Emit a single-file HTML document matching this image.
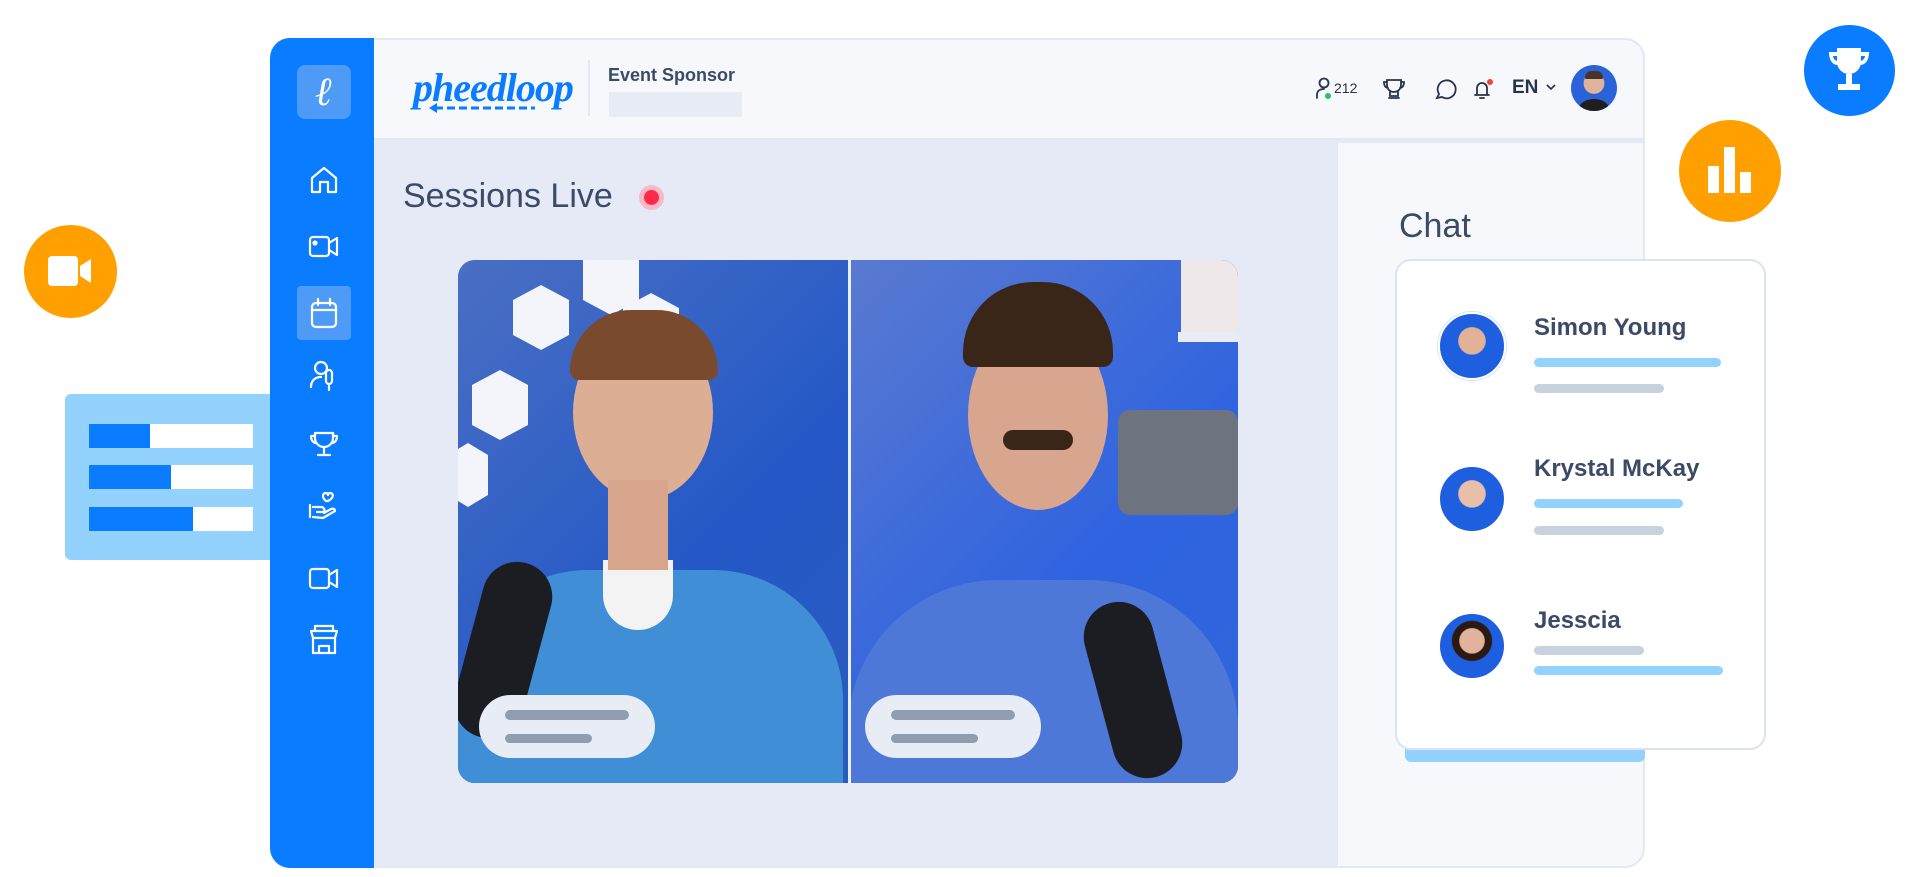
<!DOCTYPE html>
<html><head><meta charset="utf-8"><style>
*{margin:0;padding:0;box-sizing:border-box}
body{width:1916px;height:877px;background:#fff;position:relative;overflow:hidden;font-family:"Liberation Sans",sans-serif;color:#3b4a66}
.a{position:absolute}
.bar{position:absolute;border-radius:5px}
</style></head><body>
<!-- main frame -->
<div class="a" style="left:270px;top:38px;width:1375px;height:830px;border:2px solid #e3e8f1;border-radius:20px;background:#e5eaf6;overflow:hidden">
  <div class="a" style="left:102px;top:0;right:0;height:101px;background:#f6f8fb;border-bottom:3px solid #e3e8f1"></div>
  <div class="a" style="left:1066px;top:103px;right:0;bottom:0;background:#f6f8fb"></div>
</div>
<!-- sidebar -->
<div class="a" style="left:270px;top:38px;width:104px;height:830px;background:#0a7cff;border-radius:20px 0 0 20px"></div>
<div class="a" style="left:297px;top:65px;width:54px;height:54px;background:#4d9bf7;border-radius:8px;color:#fff;font:italic bold 40px 'Liberation Serif',serif;text-align:center;line-height:54px">ℓ</div>
<div class="a" style="left:297px;top:286px;width:54px;height:54px;background:#4d9bf7;border-radius:4px"></div>
<svg class="a" style="left:304px;top:160px" width="40" height="520" fill="none" stroke="#fff" stroke-width="2.2" stroke-linecap="round" stroke-linejoin="round">
 <path d="M8 32V18L20 8l12 10v14h-8v-10h-8v10z"/>
 <rect x="6" y="77" width="19" height="19" rx="3"/><path d="M25 83l8-5v17l-8-5"/><circle cx="11" cy="83" r="1.5" fill="#fff"/>
 <rect x="8" y="143" width="24" height="24" rx="4"/><path d="M8 150h24M14 139v6M26 139v6"/>
 <circle cx="17" cy="208" r="6"/><path d="M7 227c0-7 5-10 10-10M28 213v8a3 3 0 0 1-6 0v-8a3 3 0 0 1 6 0zM25 226v4"/>
 <path d="M11 273h18v5a9 9 0 0 1-18 0zM11 276H7c0 5 3 7 5 7M29 276h4c0 5-3 7-5 7M20 287v6M14 295h12"/>
 <path d="M6 345v12M9 347h8c3 0 5 4 2 5h-6M9 357l10 1 12-7c0-2-2-3-4-2l-7 4"/><path d="M22 341c-4-3-4-8 0-8 2 0 2 2 2 2s0-2 2-2c4 0 4 5-2 8z"/>
 <rect x="6" y="409" width="19" height="19" rx="3"/><path d="M25 415l8-5v17l-8-5"/>
 <path d="M9 478h22v15H9zM7 471h26l-2 7H9zM11 466h18v5H11zM15 493v-7h10v7"/>
</svg>
<!-- header -->
<div class="a" style="left:413px;top:64px;font:italic bold 40px 'Liberation Serif',serif;color:#0a7cff;letter-spacing:-1px">pheedloop</div>
<svg class="a" style="left:425px;top:100px" width="130" height="16"><path d="M10 8h100" stroke="#0a7cff" stroke-width="3" stroke-dasharray="8 4"/><path d="M4 8l8-5v10z" fill="#0a7cff"/></svg>
<div class="a" style="left:588px;top:60px;width:2px;height:56px;background:#e3e8f1"></div>
<div class="a" style="left:608px;top:65px;font-weight:bold;font-size:18px;color:#3b4a66">Event Sponsor</div>
<div class="a" style="left:609px;top:92px;width:133px;height:25px;background:#e7ecf5"></div>
<svg class="a" style="left:1312px;top:74px" width="210" height="30" fill="none" stroke="#26334d" stroke-width="1.8" stroke-linecap="round">
 <circle cx="12" cy="9" r="4.5"/><path d="M5 24v-3c0-4 3-6 7-6"/><circle cx="16" cy="22" r="3" fill="#22c55e" stroke="none"/>
 <path d="M75 6h14v5a7 7 0 0 1-14 0zM78 18v4h8v-4M75 8h-3c0 4 2 6 4 6M89 8h3c0 4-2 6-4 6M77 24h10"/>
 <path d="M125 24l2-4a9 9 0 1 1 3 3z"/>
 <path d="M163 21h14M165 21v-7a5 5 0 0 1 10 0v7M168 24h4"/><circle cx="178" cy="8" r="3" fill="#ef4444" stroke="none"/>
</svg>
<div class="a" style="left:1334px;top:80px;font-size:14px;color:#26334d">212</div>
<div class="a" style="left:1512px;top:77px;font-weight:bold;font-size:19px;color:#26334d">EN</div>
<svg class="a" style="left:1545px;top:83px" width="12" height="10"><path d="M2 2l4 4 4-4" stroke="#26334d" stroke-width="1.6" fill="none"/></svg>
<div class="a" style="left:1571px;top:65px;width:46px;height:46px;border-radius:50%;background:radial-gradient(circle at 50% 40%,#e0b49a 0 28%,#2a62d8 30%);overflow:hidden"><div class="a" style="left:8px;top:34px;width:30px;height:20px;border-radius:50%;background:#1e1e1e"></div><div class="a" style="left:14px;top:6px;width:18px;height:8px;border-radius:8px 8px 2px 2px;background:#4a3326"></div></div>
<!-- sessions -->
<div class="a" style="left:403px;top:177px;font-size:34px;color:#3b4a66">Sessions Live</div>
<div class="a" style="left:639px;top:185px;width:25px;height:25px;border-radius:50%;background:#f7b9c5"></div>
<div class="a" style="left:644px;top:190px;width:15px;height:15px;border-radius:50%;background:#ff2a4a"></div>
<!-- video -->
<div class="a" style="left:458px;top:260px;width:780px;height:523px;border-radius:17px;overflow:hidden;background:#2f5fc6">
 <div class="a" style="left:0;top:0;width:390px;height:523px;background:linear-gradient(135deg,#4a6fc4,#2458c6 60%,#2a5cc0)"></div>
 <svg class="a" style="left:0;top:0" width="260" height="300"><g fill="#f4f5fb"><path d="M55 40l28-15 28 15v35l-28 15-28-15z"/><path d="M95 -5l28-15 28 15v45l-28 15-28-15z" transform="translate(30,0)"/><path d="M165 48l28-15 28 15v40l-28 15-28-15z"/><path d="M14 125l28-15 28 15v40l-28 15-28-15z"/><path d="M-10 195l20-12 20 12v40l-20 12-20-12z"/></g></svg>
 <div class="a" style="left:390px;top:0;width:390px;height:523px;background:linear-gradient(135deg,#5a7ad0,#2f63e0 60%,#3166dc)"></div>
 <div class="a" style="left:723px;top:0;width:57px;height:72px;background:#efe8ea"></div>
 <div class="a" style="left:720px;top:72px;width:60px;height:10px;background:#e8ecf5"></div>
 <div class="a" style="left:660px;top:150px;width:120px;height:105px;border-radius:12px;background:#6d7480"></div>
 <!-- person 1 -->
 <div class="a" style="left:0;top:310px;width:385px;height:240px;border-radius:130px 130px 0 0;background:#3f8ed6"></div>
 <div class="a" style="left:145px;top:300px;width:70px;height:70px;background:#f3f3f3;border-radius:0 0 40px 40px"></div>
 <div class="a" style="left:115px;top:65px;width:140px;height:175px;border-radius:50%;background:#dcae94"></div>
 <div class="a" style="left:112px;top:50px;width:148px;height:70px;border-radius:70px 70px 10px 10px;background:#7a4a2e"></div>
 <div class="a" style="left:150px;top:220px;width:60px;height:90px;background:#d6a58c"></div>
 <!-- person 2 -->
 <div class="a" style="left:390px;top:320px;width:390px;height:220px;border-radius:150px 150px 0 0;background:#4d78d8"></div>
 <div class="a" style="left:510px;top:60px;width:140px;height:190px;border-radius:50%;background:#d8a58e"></div>
 <div class="a" style="left:505px;top:22px;width:150px;height:85px;border-radius:70px 70px 10px 10px;background:#3a2619"></div>
 <div class="a" style="left:545px;top:170px;width:70px;height:20px;border-radius:10px;background:#3a2619"></div>
 <!-- mics -->
 <div class="a" style="left:10px;top:300px;width:70px;height:180px;border-radius:35px;background:#1c1d22;transform:rotate(15deg)"></div>
 <div class="a" style="left:640px;top:340px;width:70px;height:180px;border-radius:35px;background:#1c1d22;transform:rotate(-15deg)"></div>
 <div class="a" style="left:390px;top:0;width:3px;height:523px;background:#e9eef7"></div>
 <div class="a" style="left:21px;top:435px;width:176px;height:63px;border-radius:32px;background:#e7ecf5"></div>
 <div class="bar" style="left:47px;top:450px;width:124px;height:10px;background:#8f9daf"></div>
 <div class="bar" style="left:47px;top:474px;width:87px;height:9px;background:#8f9daf"></div>
 <div class="a" style="left:407px;top:435px;width:176px;height:63px;border-radius:32px;background:#e7ecf5"></div>
 <div class="bar" style="left:433px;top:450px;width:124px;height:10px;background:#8f9daf"></div>
 <div class="bar" style="left:433px;top:474px;width:87px;height:9px;background:#8f9daf"></div>
</div>
<!-- chat -->
<div class="a" style="left:1399px;top:207px;font-size:34px;color:#3b4a66">Chat</div>
<div class="a" style="left:1405px;top:700px;width:240px;height:62px;background:#93d2fc;border-radius:0 0 6px 6px"></div>
<div class="a" style="left:1395px;top:259px;width:371px;height:491px;background:#fff;border:2px solid #dde3ee;border-radius:16px"></div>
<div class="a" style="left:1438px;top:312px;width:68px;height:68px;border-radius:50%;background:radial-gradient(circle at 50% 42%,#e1b295 0 27%,#1e5fe0 29%);border:2px solid #fff;box-shadow:0 0 0 1px #cfe6ff"></div>
<div class="a" style="left:1534px;top:314px;font-weight:bold;font-size:24px;color:#3b4a66">Simon Young</div>
<div class="bar" style="left:1534px;top:358px;width:187px;height:9px;background:#93d2fc"></div>
<div class="bar" style="left:1534px;top:384px;width:130px;height:9px;background:#c8d2df"></div>
<div class="a" style="left:1438px;top:465px;width:68px;height:68px;border-radius:50%;background:radial-gradient(circle at 50% 42%,#e8c0a8 0 27%,#1e5fe0 29%);border:2px solid #fff"></div>
<div class="a" style="left:1534px;top:455px;font-weight:bold;font-size:24px;color:#3b4a66">Krystal McKay</div>
<div class="bar" style="left:1534px;top:499px;width:149px;height:9px;background:#93d2fc"></div>
<div class="bar" style="left:1534px;top:526px;width:130px;height:9px;background:#c8d2df"></div>
<div class="a" style="left:1438px;top:612px;width:68px;height:68px;border-radius:50%;background:radial-gradient(circle at 50% 42%,#e2b39c 0 25%,#2b1a14 27% 40%,#1e5fe0 42%);border:2px solid #fff"></div>
<div class="a" style="left:1534px;top:607px;font-weight:bold;font-size:24px;color:#3b4a66">Jesscia</div>
<div class="bar" style="left:1534px;top:646px;width:110px;height:9px;background:#c8d2df"></div>
<div class="bar" style="left:1534px;top:666px;width:189px;height:9px;background:#93d2fc"></div>
<!-- floating -->
<div class="a" style="left:24px;top:225px;width:93px;height:93px;border-radius:50%;background:#ffa000"></div>
<svg class="a" style="left:46px;top:254px" width="50" height="34"><rect x="2" y="2" width="30" height="30" rx="4" fill="#fff"/><path d="M34 12l11-7v24l-11-7z" fill="#fff"/></svg>
<div class="a" style="left:65px;top:394px;width:205px;height:166px;background:#93d2fc;border-radius:6px 0 0 6px"></div>
<div class="a" style="left:89px;top:424px;width:164px;height:24px;background:#fff"></div><div class="a" style="left:89px;top:424px;width:61px;height:24px;background:#0a7cff"></div>
<div class="a" style="left:89px;top:465px;width:164px;height:24px;background:#fff"></div><div class="a" style="left:89px;top:465px;width:82px;height:24px;background:#0a7cff"></div>
<div class="a" style="left:89px;top:507px;width:164px;height:24px;background:#fff"></div><div class="a" style="left:89px;top:507px;width:104px;height:24px;background:#0a7cff"></div>
<div class="a" style="left:1804px;top:25px;width:91px;height:91px;border-radius:50%;background:#0a7cff"></div>
<svg class="a" style="left:1824px;top:44px" width="50" height="52" fill="#fff"><path d="M13 4h24v14a12 12 0 0 1-24 0z"/><path d="M13 8H5c0 9 4 13 9 13v-4c-3 0-5-3-5-5h4zM37 8h8c0 9-4 13-9 13v-4c3 0 5-3 5-5h-4z"/><rect x="22" y="30" width="6" height="10"/><rect x="14" y="40" width="22" height="6"/></svg>
<div class="a" style="left:1679px;top:120px;width:102px;height:102px;border-radius:50%;background:#ffa000"></div>
<svg class="a" style="left:1705px;top:145px" width="50" height="50" fill="#fff"><rect x="3" y="21" width="11" height="27"/><rect x="19" y="2" width="11" height="46"/><rect x="35" y="27" width="11" height="21"/></svg>
</body></html>
